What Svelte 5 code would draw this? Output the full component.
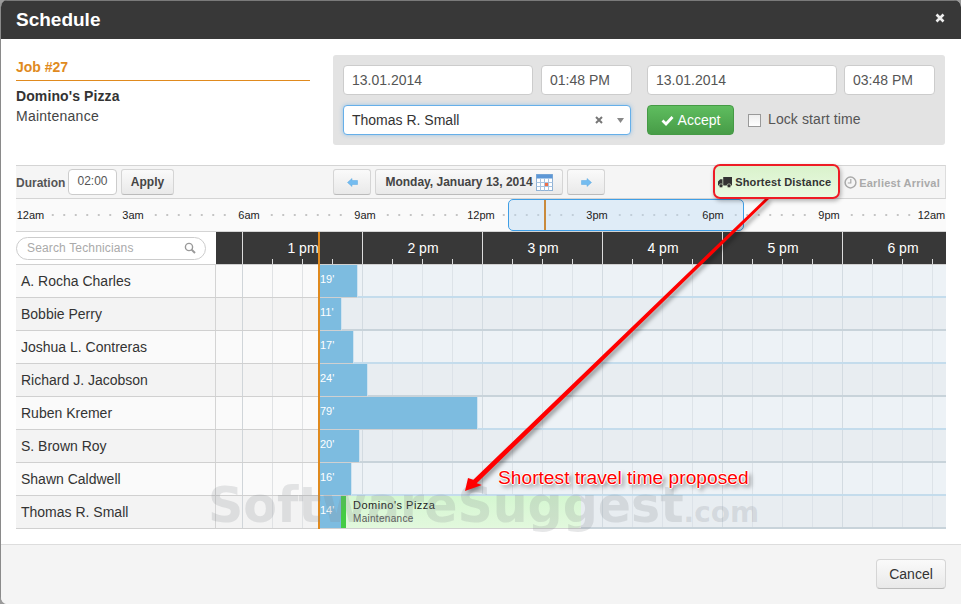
<script>
	const miniHours = ['12am', '3am', '6am', '9am', '12pm', '3pm', '6pm', '9pm', '12am'];
	const hours = ['1 pm', '2 pm', '3 pm', '4 pm', '5 pm', '6 pm'];
	const technicians = [
		{ name: 'A. Rocha Charles', mins: 19, width: 38 },
		{ name: 'Bobbie Perry', mins: 11, width: 22 },
		{ name: 'Joshua L. Contreras', mins: 17, width: 34 },
		{ name: 'Richard J. Jacobson', mins: 24, width: 48 },
		{ name: 'Ruben Kremer', mins: 79, width: 158 },
		{ name: 'S. Brown Roy', mins: 20, width: 40 },
		{ name: 'Shawn Caldwell', mins: 16, width: 32 },
		{ name: 'Thomas R. Small', mins: 14, width: 22, job: true }
	];
</script>

<div class="modal">
	<header class="head">
		<h1>Schedule</h1>
		<svg class="close" width="10" height="10" viewBox="0 0 10 10"><path d="M1.5 1.5l7 7M8.5 1.5l-7 7" stroke="#eee" stroke-width="2.6" /></svg>
	</header>

	<section class="top">
		<div class="job">
			<div class="job-no">Job #27</div>
			<div class="job-client">Domino's Pizza</div>
			<div class="job-type">Maintenance</div>
		</div>
		<div class="panel">
			<div class="panel-row">
				<div class="field w190">13.01.2014</div>
				<div class="field w91">01:48 PM</div>
				<div class="field w190 ml">13.01.2014</div>
				<div class="field w91 tight">03:48 PM</div>
			</div>
			<div class="panel-row">
				<div class="select">
					<span>Thomas R. Small</span>
					<svg class="clear" width="8" height="8" viewBox="0 0 8 8"><path d="M1 1l6 6M7 1l-6 6" stroke="#777" stroke-width="2" /></svg>
					<svg width="7" height="5" viewBox="0 0 7 5"><path d="M0 0h7L3.5 5z" fill="#888" /></svg>
				</div>
				<button class="accept">
					<svg width="13" height="11" viewBox="0 0 13 11"><path d="M1.5 5.5l3.5 3.5 6.5-7" fill="none" stroke="#fff" stroke-width="2.8" /></svg>
					Accept
				</button>
				<span class="check-box"></span>
				<span class="lock">Lock start time</span>
			</div>
		</div>
	</section>

	<section class="schedule">
		<div class="toolbar">
			<div class="duration">
				<span class="dur-label">Duration</span>
				<div class="dur-input">02:00</div>
				<button class="btn apply">Apply</button>
			</div>
			<div class="dates">
				<button class="btn nav" aria-label="Previous day">
					<svg width="11" height="9" viewBox="0 0 11 9"><path d="M0.5 4.5L5 0.5V2.5H10.5V6.5H5V8.5z" fill="#74bcf0" stroke="#5aa9e2" stroke-width=".5" /></svg>
				</button>
				<button class="btn date">
					Monday, January 13, 2014
					<svg width="17" height="17" viewBox="0 0 17 17">
						<rect x=".5" y=".5" width="16" height="16" fill="#fff" stroke="#8fb2d6" />
						<rect x=".5" y=".5" width="16" height="4" fill="#5d97d6" />
						<path d="M4.5 4.5v12M8.5 4.5v12M12.5 4.5v12M.5 8.5h16M.5 12.5h16" stroke="#a9c4e0" />
						<rect x="9" y="9" width="3" height="3" fill="#f0704a" />
					</svg>
				</button>
				<button class="btn nav" aria-label="Next day">
					<svg width="11" height="9" viewBox="0 0 11 9"><path d="M10.5 4.5L6 0.5V2.5H0.5V6.5H6V8.5z" fill="#74bcf0" stroke="#5aa9e2" stroke-width=".5" /></svg>
				</button>
			</div>
			<div class="modes">
				<div class="mode active">
					<svg width="14" height="12" viewBox="0 0 14 12"><path d="M14 1H5.2V9.5H14zM4.5 3.2H2.2L0 5.6V9.5H4.5z" fill="#333" /><circle cx="3" cy="9.8" r="2" fill="#333" stroke="#e0f4d4" stroke-width=".6" /><circle cx="11" cy="9.8" r="2" fill="#333" stroke="#e0f4d4" stroke-width=".6" /></svg>
					Shortest Distance
				</div>
				<div class="mode">
					<svg width="13" height="13" viewBox="0 0 13 13"><circle cx="6.5" cy="6.5" r="5.4" fill="none" stroke="#aaa" stroke-width="1.5" /><path d="M6.8 3V7H3.8" fill="none" stroke="#aaa" stroke-width="1.2" /></svg>
					Earliest Arrival
				</div>
			</div>
		</div>

		<div class="mini">
			{#each miniHours as hour, i}
				<span class="mini-label">{hour}</span>
				{#if i < miniHours.length - 1}
					<span class="mini-dots" class:edge={i === 0 || i === miniHours.length - 2}></span>
				{/if}
			{/each}
			<div class="mini-range"><span class="mini-now"></span></div>
		</div>

		<div class="grid">
			<div class="grid-head">
				<div class="search">
					<span>Search Technicians</span>
					<svg width="12" height="12" viewBox="0 0 12 12"><circle cx="5" cy="5" r="3.6" fill="none" stroke="#999" stroke-width="1.4" /><path d="M7.6 7.6L11 11" stroke="#999" stroke-width="2" /></svg>
				</div>
				<div class="hours">
					{#each hours as hour}
						<span class="hour">{hour}</span>
					{/each}
				</div>
			</div>
			{#each technicians as tech, i}
				<div class="row" class:alt={i % 2 === 1}>
					<div class="name">{tech.name}</div>
					<div class="track">
						<div class="past"></div>
						<div class="bar" style="width: {tech.width}px">{tech.mins}'</div>
						{#if tech.job}
							<div class="booking">
								<b>Domino's Pizza</b>
								<span>Maintenance</span>
							</div>
						{/if}
						<div class="rest"></div>
					</div>
				</div>
			{/each}
			<div class="now"></div>
		</div>
	</section>

	<footer class="foot">
		<button class="btn cancel">Cancel</button>
	</footer>

	<div class="watermark">SoftwareSuggest<small>.com</small></div>

	<svg class="arrow" width="961" height="604" viewBox="0 0 961 604">
		<polygon points="769,199.1 767,196.9 473.3,479.7 468,478 465,491 482,485 476.7,483.3" fill="#f00" />
	</svg>
	<div class="note">Shortest travel time proposed</div>
</div>

<style>
	:global(body) {
		background: #9a9a9a;
		font-family: 'Liberation Sans', Arial, sans-serif;
	}
	.modal {
		position: relative;
		width: 961px;
		height: 604px;
		box-sizing: border-box;
		border-left: 1px solid #8a8a8a;
		border-radius: 7px 7px 0 7px;
		background: #fff;
		display: flex;
		flex-direction: column;
		overflow: hidden;
		color: #333;
	}
	.head {
		height: 39px;
		flex: none;
		box-sizing: border-box;
		background: #383838;
		border-top: 1px solid #7a7a7a;
		padding: 0 16px 0 15px;
		display: flex;
		align-items: center;
		justify-content: space-between;
	}
	.head h1 {
		margin: 0;
		font-size: 19px;
		font-weight: bold;
		color: #fff;
	}
	.close {
		margin-bottom: 4px;
	}

	.top {
		display: flex;
		padding: 16px 15px 0 15px;
		height: 90px;
		flex: none;
	}
	.job {
		width: 294px;
		margin-right: 23px;
	}
	.job-no {
		font-size: 14px;
		font-weight: bold;
		color: #e08a1e;
		height: 25px;
		line-height: 24px;
		border-bottom: 1px solid #e08a1e;
	}
	.job-client {
		margin-top: 6px;
		font-size: 14px;
		font-weight: bold;
		letter-spacing: .1px;
		line-height: 18px;
	}
	.job-type {
		font-size: 14px;
		letter-spacing: .25px;
		line-height: 22px;
		color: #444;
	}
	.panel {
		width: 612px;
		height: 90px;
		box-sizing: border-box;
		background: #e3e3e3;
		border-radius: 3px;
		padding: 10px;
		display: flex;
		flex-direction: column;
		gap: 10px;
	}
	.panel-row {
		display: flex;
		align-items: center;
		height: 30px;
		gap: 8px;
	}
	.field {
		height: 30px;
		box-sizing: border-box;
		background: #fff;
		border: 1px solid #ccc;
		border-radius: 4px;
		padding: 0 8px;
		font-size: 14px;
		line-height: 28px;
		color: #555;
	}
	.w190 {
		width: 190px;
	}
	.w91 {
		width: 91px;
	}
	.ml {
		margin-left: 7px;
	}
	.tight {
		margin-left: -1px;
	}
	.select {
		width: 288px;
		height: 30px;
		box-sizing: border-box;
		background: #fff;
		border: 1px solid #66afe9;
		border-radius: 4px;
		box-shadow: 0 0 4px rgba(102, 175, 233, .6);
		padding: 0 6px 0 8px;
		display: flex;
		align-items: center;
		font-size: 14px;
	}
	.select span {
		flex: 1;
	}
	.clear {
		margin-right: 14px;
	}
	.accept {
		width: 87px;
		height: 30px;
		margin-left: 8px;
		padding: 0;
		border: 1px solid #459a45;
		border-radius: 4px;
		background: linear-gradient(#5fbd5f, #479c47);
		color: #fff;
		font: 14px 'Liberation Sans', Arial, sans-serif;
		display: flex;
		align-items: center;
		justify-content: center;
		gap: 4px;
	}
	.check-box {
		width: 11px;
		height: 11px;
		margin-left: 6px;
		border: 1px solid #999;
		background: linear-gradient(#eee, #fff);
	}
	.lock {
		margin: -2px 0 0 -1px;
		font-size: 14px;
		color: #555;
		letter-spacing: .1px;
	}

	.schedule {
		margin: 20px 15px 0 15px;
		width: 930px;
		flex: none;
		position: relative;
	}
	.toolbar {
		height: 34px;
		box-sizing: border-box;
		background: #f5f5f5;
		border-top: 1px solid #d4d4d4;
		border-bottom: 1px solid #d4d4d4;
		border-right: 1px solid #ddd;
		display: flex;
		align-items: center;
	}
	.duration {
		width: 317px;
		display: flex;
		align-items: center;
		gap: 4px;
	}
	.dur-label {
		font-size: 12px;
		font-weight: bold;
		color: #555;
		width: 48px;
		padding-top: 2px;
	}
	.dur-input {
		width: 49px;
		height: 26px;
		box-sizing: border-box;
		background: #fff;
		border: 1px solid #ccc;
		border-radius: 4px;
		font-size: 12px;
		line-height: 23px;
		text-align: center;
		color: #555;
	}
	.btn {
		height: 26px;
		box-sizing: border-box;
		padding: 0;
		border: 1px solid #d5d5d5;
		border-bottom-color: #bbb;
		border-radius: 3px;
		background: linear-gradient(#fafafa, #e9e9e9);
		font: bold 12px 'Liberation Sans', Arial, sans-serif;
		color: #444;
		display: flex;
		align-items: center;
		justify-content: center;
	}
	.apply {
		width: 53px;
	}
	.dates {
		display: flex;
		gap: 4px;
	}
	.nav {
		width: 38px;
	}
	.date {
		width: 188px;
		gap: 3px;
	}
	.modes {
		margin-left: auto;
		align-self: stretch;
		display: flex;
		align-items: center;
		padding-right: 5px;
	}
	.mode {
		display: flex;
		align-items: center;
		gap: 2px;
		padding-top: 1px;
		font-size: 11px;
		font-weight: bold;
		letter-spacing: .22px;
		color: #aaa;
	}
	.mode.active {
		width: 127px;
		height: 35px;
		box-sizing: border-box;
		margin: -1px 4px 0 0;
		padding: 1px 0 0 3px;
		gap: 3px;
		letter-spacing: .15px;
		color: #333;
		background: linear-gradient(#d9f2cb, #eafae2);
		border: 2px solid #ee1c25;
		border-radius: 7px;
		box-shadow: 1px 2px 4px rgba(0, 0, 0, .3);
		position: relative;
		z-index: 2;
	}

	.mini {
		position: relative;
		height: 33px;
		box-sizing: border-box;
		background: #fafafa;
		border-bottom: 1px solid #d4d4d4;
		display: flex;
		align-items: center;
		font-size: 11px;
		color: #222;
	}
	.mini-label {
		flex: none;
		width: 29px;
		text-align: center;
		position: relative;
		z-index: 1;
	}
	.mini-dots {
		flex: 0 0 83px;
		height: 2px;
		margin: 0 2px;
		background: radial-gradient(circle, #c4c4c4 1px, transparent 1.2px) 0 0 / 11.5px 2px repeat-x;
	}
	.mini-dots.edge {
		flex: 1;
	}
	.mini-range {
		position: absolute;
		left: 492px;
		top: 0;
		width: 236px;
		height: 32px;
		box-sizing: border-box;
		background: rgba(190, 220, 245, .45);
		border: 1px solid #3f9fe6;
		border-radius: 5px;
	}
	.mini-now {
		position: absolute;
		left: 35px;
		top: 0;
		bottom: 0;
		width: 2px;
		background: #c98a3c;
	}

	.grid {
		position: relative;
	}
	.grid-head {
		height: 33px;
		display: flex;
		border-bottom: 1px solid #d0d0d0;
		box-sizing: border-box;
	}
	.search {
		width: 190px;
		height: 23px;
		margin: 5px 10px 0 0;
		box-sizing: border-box;
		flex: none;
		background: #fff;
		border: 1px solid #ccc;
		border-radius: 12px;
		padding: 0 9px 2px 10px;
		display: flex;
		align-items: center;
		justify-content: space-between;
		font-size: 12px;
		letter-spacing: .15px;
		color: #aaa;
	}
	.hours {
		flex: 1;
		padding-left: 27px;
		display: flex;
		background:
			repeating-linear-gradient(90deg, #ddd 0 1px, transparent 1px 120px) 26px 0 / 100% 100% no-repeat,
			repeating-linear-gradient(90deg, #ddd 0 1px, transparent 1px 30px) 26px 100% / 100% 5px no-repeat,
			#383838;
		overflow: hidden;
	}
	.hour {
		flex: none;
		width: 120px;
		text-align: center;
		font-size: 14px;
		line-height: 33px;
		height: 32px;
		color: #fff;
	}

	.row {
		height: 33px;
		box-sizing: border-box;
		display: flex;
		background: #fafafa;
		border-bottom: 1px solid #d0d0d0;
	}
	.row.alt {
		background: #f3f3f3;
	}
	.name {
		width: 200px;
		flex: none;
		box-sizing: border-box;
		padding-left: 5px;
		border-right: 1px solid #d4d4d4;
		font-size: 14px;
		line-height: 32px;
		color: #333;
	}
	.track {
		flex: 1;
		display: flex;
		background:
			repeating-linear-gradient(90deg, #d0d5d9 0 1px, transparent 1px 120px) 26px 0 / 100% 100% no-repeat,
			repeating-linear-gradient(90deg, #e0e2e4 0 1px, transparent 1px 30px) 26px 0 / 100% 100% no-repeat;
	}
	.past {
		width: 103px;
		flex: none;
	}
	.bar {
		flex: none;
		box-sizing: border-box;
		background: #7dbce0;
		color: #fff;
		font-size: 11px;
		padding-left: 1px;
		line-height: 29px;
	}
	.rest {
		flex: 1;
		background: rgba(215, 228, 240, .38);
		border-left: 1px solid #cfe3f0;
		border-bottom: 2px solid #c4dcec;
		margin-bottom: -1px;
	}
	.alt .rest {
		background: rgba(215, 228, 238, .4);
		border-bottom-color: #c8d3da;
	}
	.booking {
		width: 240px;
		flex: none;
		box-sizing: border-box;
		padding: 2px 0 0 7px;
		border-left: 5px solid #44cc44;
		border-radius: 0 4px 4px 0;
		background: linear-gradient(#d5f7d1, #e2f8dd);
		display: flex;
		flex-direction: column;
		font-size: 10px;
		letter-spacing: .3px;
		color: #555;
		line-height: 14px;
	}
	.booking b {
		font-weight: normal;
		font-size: 11px;
		letter-spacing: .5px;
		color: #222;
	}
	.booking + .rest {
		border-left: none;
	}
	.now {
		position: absolute;
		left: 302px;
		top: 0;
		bottom: 0;
		width: 2px;
		background: #e08a1e;
	}

	.foot {
		margin-top: auto;
		height: 60px;
		flex: none;
		box-sizing: border-box;
		background: #f4f4f4;
		border-top: 1px solid #ddd;
		padding: 14px 15px 0 0;
		display: flex;
		justify-content: flex-end;
	}
	.cancel {
		width: 70px;
		height: 30px;
		font-weight: normal;
		font-size: 14px;
		border-radius: 4px;
		color: #333;
	}

	.watermark {
		position: absolute;
		left: 207px;
		top: 471px;
		font-family: 'DejaVu Sans', sans-serif;
		font-size: 49px;
		font-weight: bold;
		line-height: 70px;
		color: rgba(130, 135, 140, .2);
		white-space: nowrap;
		pointer-events: none;
	}
	.watermark small {
		font-size: 28px;
	}
	.arrow {
		position: absolute;
		left: -1px;
		top: 0;
		pointer-events: none;
		filter: drop-shadow(2px 3px 2px rgba(0, 0, 0, .4));
	}
	.note {
		position: absolute;
		left: 497px;
		top: 466px;
		font-size: 19.2px;
		line-height: 24px;
		color: #f00;
		white-space: nowrap;
		text-shadow:
			-1px 0 #fff,
			1px 0 #fff,
			0 -1px #fff,
			0 1px #fff,
			3px 3px 4px rgba(0, 0, 0, .55);
	}
</style>
